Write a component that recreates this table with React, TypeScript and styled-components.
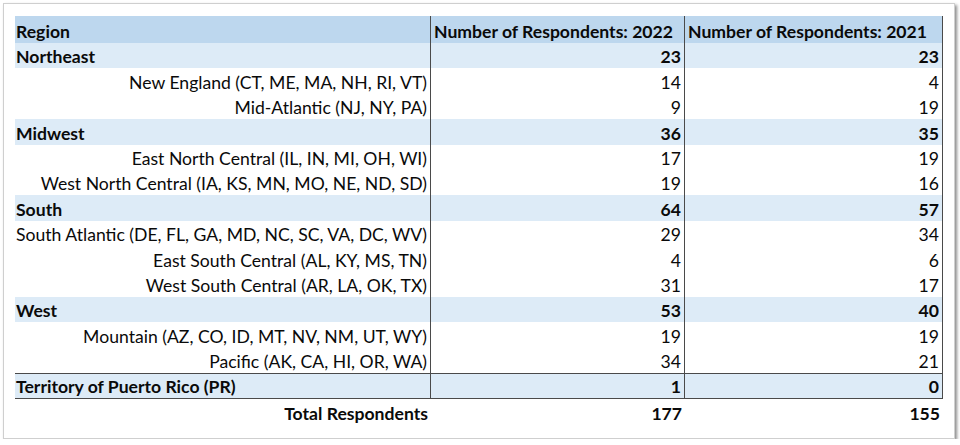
import React from "react";
import styled, { createGlobalStyle } from "styled-components";

const Global = createGlobalStyle`
  html, body { margin: 0; padding: 0; background: #ffffff; }
  body { font-family: Lato, "Liberation Sans", sans-serif; }
`;

const Card = styled.div`
  box-sizing: border-box;
  margin: 3px 0 0 3px;
  width: 952px;
  height: 436px;
  background: #ffffff;
  border: 1px solid #cfcfcf;
  box-shadow: 2px 2px 3px rgba(0, 0, 0, 0.45);
  padding: 12px 0 0 11px;
`;

const Table = styled.div`
  display: flex;
  flex-direction: column;
  width: 928px;
`;

type Kind = "head" | "region" | "sub" | "territory" | "total";

const bg: Record<Kind, string> = {
  head: "#bdd7ee",
  region: "#ddebf7",
  sub: "#ffffff",
  territory: "#ddebf7",
  total: "#ffffff",
};

const heights: Record<Kind, string> = {
  head: "27px",
  region: "25.4px",
  sub: "25.4px",
  territory: "26px",
  total: "26px",
};

const Row = styled.div<{ $kind: Kind }>`
  display: grid;
  grid-template-columns: 416px 254px 258px;
  height: ${(p) => heights[p.$kind]};
  background: ${(p) => bg[p.$kind]};
  font-weight: ${(p) => (p.$kind === "sub" ? 400 : 700)};
  box-sizing: border-box;
  border-top: ${(p) => (p.$kind === "territory" ? "1px solid #4a4a4a" : "none")};
  border-bottom: ${(p) => (p.$kind === "territory" ? "1px solid #4a4a4a" : "none")};
`;

const Cell = styled.div<{ $align: "left" | "right"; $lined: boolean; $pad?: number }>`
  box-sizing: border-box;
  display: flex;
  align-items: flex-end;
  justify-content: ${(p) => (p.$align === "left" ? "flex-start" : "flex-end")};
  padding: 0 ${(p) => (p.$align === "right" ? "3px" : "0")} 1px
    ${(p) => (p.$align === "left" ? `${p.$pad ?? 1}px` : "0")};
  border-right: ${(p) => (p.$lined ? "1px solid #4a4a4a" : "none")};
  font-size: 17.6px;
  line-height: 21px;
  color: #0a0a0a;
  white-space: nowrap;
`;

type R = { kind: Kind; label: string; a: string; b: string };

const rows: R[] = [
  { kind: "region", label: "Northeast", a: "23", b: "23" },
  { kind: "sub", label: "New England (CT, ME, MA, NH, RI, VT)", a: "14", b: "4" },
  { kind: "sub", label: "Mid-Atlantic (NJ, NY, PA)", a: "9", b: "19" },
  { kind: "region", label: "Midwest", a: "36", b: "35" },
  { kind: "sub", label: "East North Central (IL, IN, MI, OH, WI)", a: "17", b: "19" },
  { kind: "sub", label: "West North Central (IA, KS, MN, MO, NE, ND, SD)", a: "19", b: "16" },
  { kind: "region", label: "South", a: "64", b: "57" },
  { kind: "sub", label: "South Atlantic (DE, FL, GA, MD, NC, SC, VA, DC, WV)", a: "29", b: "34" },
  { kind: "sub", label: "East South Central (AL, KY, MS, TN)", a: "4", b: "6" },
  { kind: "sub", label: "West South Central (AR, LA, OK, TX)", a: "31", b: "17" },
  { kind: "region", label: "West", a: "53", b: "40" },
  { kind: "sub", label: "Mountain (AZ, CO, ID, MT, NV, NM, UT, WY)", a: "19", b: "19" },
  { kind: "sub", label: "Pacific (AK, CA, HI, OR, WA)", a: "34", b: "21" },
  { kind: "territory", label: "Territory of Puerto Rico (PR)", a: "1", b: "0" },
  { kind: "total", label: "Total Respondents", a: "177", b: "155" },
];

export default function App() {
  return (
    <>
      <Global />
      <Card>
        <Table>
          <Row $kind="head">
            <Cell $align="left" $lined>Region</Cell>
            <Cell $align="left" $lined $pad={3}>Number of Respondents: 2022</Cell>
            <Cell $align="left" $lined $pad={3}>Number of Respondents: 2021</Cell>
          </Row>
          {rows.map((r) => {
            const lined = r.kind !== "total";
            const labelAlign = r.kind === "region" || r.kind === "territory" ? "left" : "right";
            return (
              <Row $kind={r.kind} key={r.label}>
                <Cell $align={labelAlign} $lined={lined}>{r.label}</Cell>
                <Cell $align="right" $lined={lined}>{r.a}</Cell>
                <Cell $align="right" $lined={lined}>{r.b}</Cell>
              </Row>
            );
          })}
        </Table>
      </Card>
    </>
  );
}
